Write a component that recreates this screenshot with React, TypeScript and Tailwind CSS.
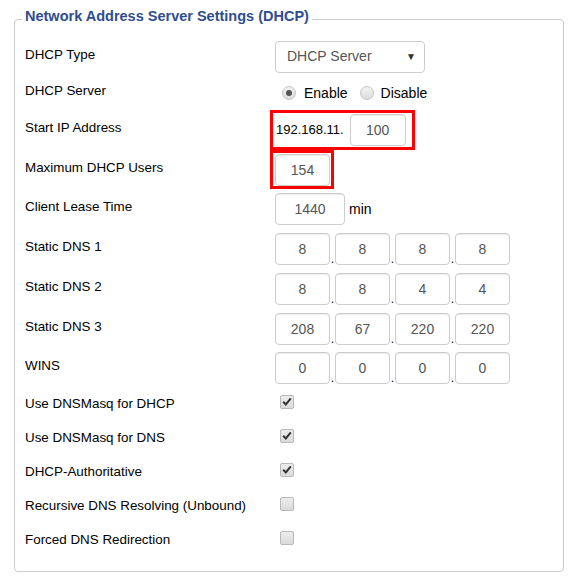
const font = "font-['Liberation_Sans',Arial,sans-serif]";

function TextBox({ value, w = "w-[55px]" }: { value: string; w?: string }) {
  return (
    <input
      readOnly
      value={value}
      className={`${w} h-[32px] rounded-[4px] border border-[#cccccc] bg-white text-center text-[14px] text-[#555555] shadow-[inset_0_1px_1px_rgba(0,0,0,0.075)] outline-none ${font}`}
    />
  );
}

function IpBoxes({ parts }: { parts: string[] }) {
  return (
    <div className="flex items-center pl-[5px]">
      {parts.map((p, i) => (
        <div key={i} className="flex items-end">
          {i > 0 && <span className="w-[5px] text-center text-[12px] leading-none text-black">.</span>}
          <TextBox value={p} />
        </div>
      ))}
    </div>
  );
}

function Radio({ checked }: { checked?: boolean }) {
  return (
    <span className="flex h-[14px] w-[14px] items-center justify-center rounded-full border border-[#c4c4c4] bg-gradient-to-b from-[#f2f2f2] to-[#dcdcdc]">
      {checked && <span className="h-[6px] w-[6px] rounded-full bg-[#555555]" />}
    </span>
  );
}

function Check({ checked }: { checked?: boolean }) {
  return (
    <span className="ml-[10px] -mt-[5px] flex h-[14px] w-[14px] items-center justify-center rounded-[2px] border border-[#b8b8b8] bg-gradient-to-b from-[#ececec] to-[#dadada]">
      {checked && (
        <svg width="10" height="9" viewBox="0 0 10 9">
          <path d="M1.2 4.8 L3.8 7.4 L8.8 1.4" fill="none" stroke="#333333" strokeWidth="2" />
        </svg>
      )}
    </span>
  );
}

function Row({
  label,
  h,
  lift = true,
  children,
}: {
  label: string;
  h: string;
  lift?: boolean;
  children?: React.ReactNode;
}) {
  return (
    <div className={`flex items-center ${h}`}>
      <div className={`w-[245px] text-[13.4px] text-black ${lift ? "-mt-[3px]" : ""}`}>{label}</div>
      <div className="flex items-center">{children}</div>
    </div>
  );
}

export default function App() {
  return (
    <div className={`min-h-[588px] bg-white pl-[14px] pt-[6px] ${font}`}>
      <fieldset className="w-[550px] rounded-[4px] border border-[#cccccc] pb-[14px] pl-[10px] pt-[5px]">
        <legend className="-ml-[3px] px-[3px] pb-[7px] text-[14.5px] font-bold leading-[20px] text-[#2f4d8e]">
          Network Address Server Settings (DHCP)
        </legend>

        <Row label="DHCP Type" h="h-[37px]">
          <div className="ml-[5px] flex h-[32px] w-[150px] items-center justify-between rounded-[4px] border border-[#cccccc] bg-white pl-[11px] pr-[8px] text-[14px] text-[#555555]">
            <span>DHCP Server</span>
            <span className="text-[10px] text-[#333333]">▼</span>
          </div>
        </Row>

        <Row label="DHCP Server" h="h-[35px]">
          <div className="flex items-center pl-[12px] text-[14px] text-black">
            <Radio checked />
            <span className="ml-[8px] mt-[2px]">Enable</span>
            <span className="ml-[12px]"><Radio /></span>
            <span className="ml-[7px] mt-[2px]">Disable</span>
          </div>
        </Row>

        <Row label="Start IP Address" h="h-[40px]">
          <div className="flex h-[40px] w-[145px] items-center border-[3px] border-[#ff0000] pl-[3px]">
            <span className="text-[13px] text-black">192.168.11.</span>
            <span className="ml-[6px]"><TextBox value="100" w="w-[56px]" /></span>
          </div>
        </Row>

        <Row label="Maximum DHCP Users" h="h-[39px]">
          <div className="flex h-[39px] w-[64px] items-center border-[3px] border-[#ff0000] pl-[2px]">
            <TextBox value="154" />
          </div>
        </Row>

        <Row label="Client Lease Time" h="h-[40px]">
          <div className="flex items-center pl-[5px]">
            <TextBox value="1440" w="w-[70px]" />
            <span className="ml-[4px] text-[14px] text-black">min</span>
          </div>
        </Row>

        <Row label="Static DNS 1" h="h-[40px]">
          <IpBoxes parts={["8", "8", "8", "8"]} />
        </Row>
        <Row label="Static DNS 2" h="h-[40px]">
          <IpBoxes parts={["8", "8", "4", "4"]} />
        </Row>
        <Row label="Static DNS 3" h="h-[40px]">
          <IpBoxes parts={["208", "67", "220", "220"]} />
        </Row>
        <Row label="WINS" h="h-[38px]">
          <IpBoxes parts={["0", "0", "0", "0"]} />
        </Row>

        <Row label="Use DNSMasq for DHCP" h="h-[34px]" lift={false}>
          <Check checked />
        </Row>
        <Row label="Use DNSMasq for DNS" h="h-[34px]" lift={false}>
          <Check checked />
        </Row>
        <Row label="DHCP-Authoritative" h="h-[34px]" lift={false}>
          <Check checked />
        </Row>
        <Row label="Recursive DNS Resolving (Unbound)" h="h-[34px]" lift={false}>
          <Check />
        </Row>
        <Row label="Forced DNS Redirection" h="h-[34px]" lift={false}>
          <Check />
        </Row>
      </fieldset>
    </div>
  );
}
